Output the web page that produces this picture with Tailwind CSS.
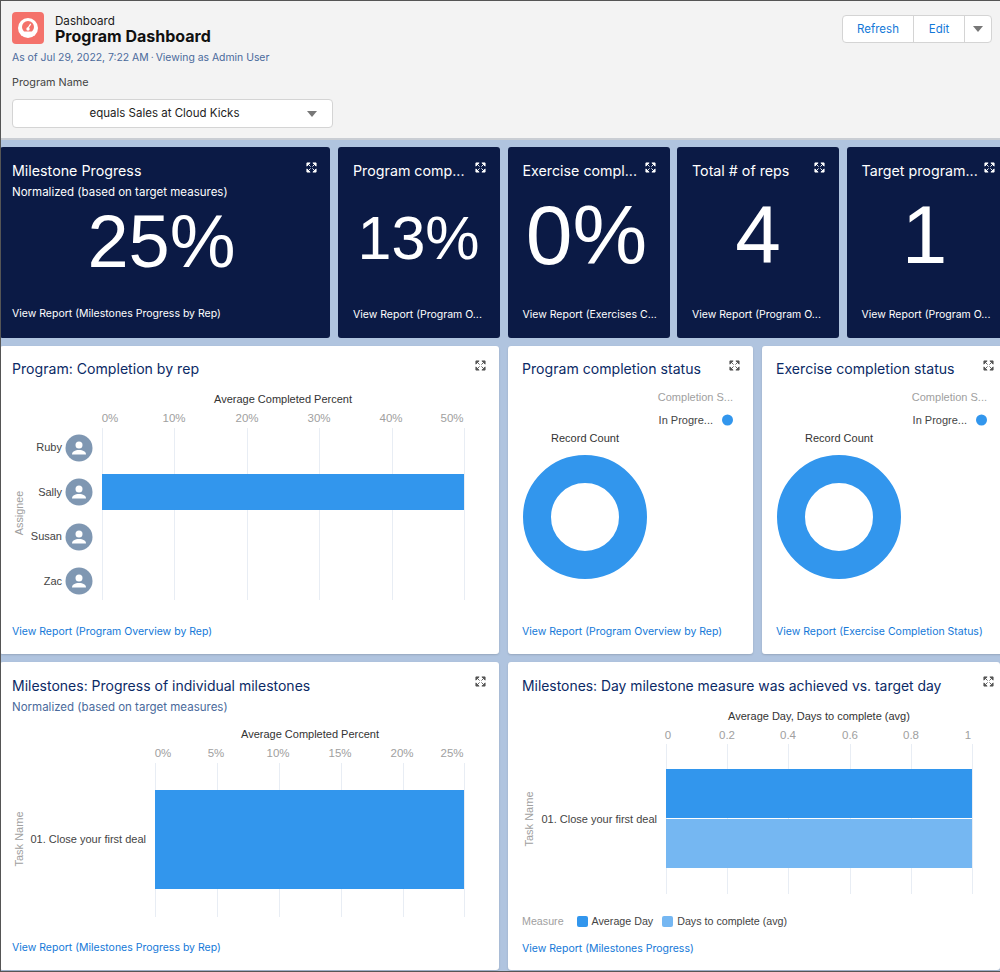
<!DOCTYPE html>
<html>
<head>
<meta charset="utf-8">
<script src="https://cdn.jsdelivr.net/npm/@tailwindcss/browser@4"></script>
</head>
<body class="m-0 w-[1000px] h-[972px] overflow-hidden bg-[#b0c4df] font-['Liberation_Sans',sans-serif]">
<div class="w-[1000px] h-[972px] flex flex-col border-t border-l border-b border-[#555] overflow-hidden">
  <header class="h-[139px] shrink-0 bg-[#f3f3f3] border-b-2 border-[#c9cdd3] pl-[11px] pr-[8px] pt-[11px] flex justify-between items-start">
    <div class="w-[321px]">
      <div class="flex items-start gap-[11px]">
        <div class="w-8 h-8 rounded-[4px] bg-[#f4726b] flex items-center justify-center">
          <svg viewBox="0 0 24 24" class="w-[24px] h-[24px]"><circle cx="12" cy="12" r="10" fill="#fff"/><circle cx="12" cy="11" r="6" fill="#f4726b"/><path d="M5 15.500h14v4H5z" fill="#fff"/><path d="M11 12.500l3.200-5 1 .7-3.300 5.300z" fill="#fff"/><circle cx="12" cy="13" r="1.700" fill="#fff"/></svg>
        </div>
        <div class="mt-[2px]">
          <div class="text-[11.6px] leading-[14px] text-[#1a1a1a] font-['Inter',sans-serif]">Dashboard</div>
          <div class="text-[16px] leading-[17px] font-bold text-[#111] font-['Inter',sans-serif]">Program Dashboard</div>
        </div>
      </div>
      <div class="mt-[6px] text-[10.4px] leading-[14px] text-[#4a6a9c] font-['Inter',sans-serif]">As of Jul 29, 2022, 7:22 AM<span class="mx-[2px]">·</span>Viewing as Admin User</div>
      <div class="mt-[11px] text-[10.8px] leading-[14px] text-[#444] font-['Inter',sans-serif]">Program Name</div>
      <div class="mt-[9px] h-[29px] bg-white border border-[#d4d4d4] rounded-[4px] flex items-center relative">
        <span class="w-full text-center pr-[16px] pt-px text-[11.5px] text-[#222] font-['Inter',sans-serif]">equals Sales at Cloud Kicks</span>
        <span class="absolute right-[15px] top-[11px] w-0 h-0 border-l-[5px] border-r-[5px] border-t-[6px] border-l-transparent border-r-transparent border-t-[#777]"></span>
      </div>
    </div>
    <div class="mt-[3px] h-[28px] flex bg-white border border-[#d4d4d4] rounded-[4px] text-[11.5px] text-[#1378d8] font-['Inter',sans-serif]">
      <div class="w-[71px] pt-[2px] flex items-center justify-center border-r border-[#d4d4d4]">Refresh</div>
      <div class="w-[51px] pt-[2px] flex items-center justify-center border-r border-[#d4d4d4]">Edit</div>
      <div class="w-[26px] flex items-center justify-center"><span class="w-0 h-0 border-l-[5px] border-r-[5px] border-t-[6px] border-l-transparent border-r-transparent border-t-[#777]"></span></div>
    </div>
  </header>

  <section class="mt-[7px] h-[191px] shrink-0 flex gap-[7.5px] -ml-px">
    <div class="w-[330px] mr-[0.5px] shrink-0 relative bg-[#0b1a45] rounded-[3px] text-white flex flex-col pl-[12px]">
      <div class="mt-[15px] text-[14.25px] leading-[18px] font-['Inter',sans-serif]">Milestone Progress</div>
      <div class="mt-[5px] text-[11.5px] leading-[15px] font-['Inter',sans-serif]">Normalized (based on target measures)</div>
      <div class="h-[84px] flex items-center justify-center text-[74px] leading-none -ml-[19px]">25%</div>
      <div class="mt-[23px] text-[10.5px] leading-[14px] font-['Inter',sans-serif]">View Report (Milestones Progress by Rep)</div>
      <svg viewBox="0 0 12 12" class="absolute right-[13px] top-[15px] w-[11px] h-[11px]" fill="#fff" stroke="#fff" stroke-width="1"><path d="M1 1h3.5L1 4.5zM11 1H7.5L11 4.500zM1 11h3.500L1 7.500zM11 11H7.500L11 7.500z"/><path d="M3 3l2 2M9 3L7 5M3 9l2-2M9 9L7 7"/></svg>
    </div>
    <div class="w-[162px] shrink-0 relative bg-[#0b1a45] rounded-[3px] text-white flex flex-col pl-[15px]">
      <div class="mt-[15px] text-[14.25px] leading-[18px] font-['Inter',sans-serif]">Program comp...</div>
      <div class="mt-[16px] h-[84px] flex items-center justify-center text-[61px] leading-none -ml-[16px]">13%</div>
      <div class="mt-[28px] text-[10.5px] leading-[14px] font-['Inter',sans-serif] whitespace-nowrap">View Report (Program O...</div>
      <svg viewBox="0 0 12 12" class="absolute right-[14px] top-[15px] w-[11px] h-[11px]" fill="#fff" stroke="#fff" stroke-width="1"><path d="M1 1h3.5L1 4.5zM11 1H7.5L11 4.500zM1 11h3.500L1 7.500zM11 11H7.500L11 7.500z"/><path d="M3 3l2 2M9 3L7 5M3 9l2-2M9 9L7 7"/></svg>
    </div>
    <div class="w-[162px] shrink-0 relative bg-[#0b1a45] rounded-[3px] text-white flex flex-col pl-[15px]">
      <div class="mt-[15px] text-[14.25px] leading-[18px] font-['Inter',sans-serif]">Exercise compl...</div>
      <div class="mt-[13px] h-[84px] flex items-center justify-center text-[84px] leading-none -ml-[19px]">0%</div>
      <div class="mt-[31px] text-[10.5px] leading-[14px] font-['Inter',sans-serif] whitespace-nowrap">View Report (Exercises C...</div>
      <svg viewBox="0 0 12 12" class="absolute right-[14px] top-[15px] w-[11px] h-[11px]" fill="#fff" stroke="#fff" stroke-width="1"><path d="M1 1h3.5L1 4.5zM11 1H7.5L11 4.500zM1 11h3.500L1 7.500zM11 11H7.500L11 7.500z"/><path d="M3 3l2 2M9 3L7 5M3 9l2-2M9 9L7 7"/></svg>
    </div>
    <div class="w-[162px] shrink-0 relative bg-[#0b1a45] rounded-[3px] text-white flex flex-col pl-[15px]">
      <div class="mt-[15px] text-[14.25px] leading-[18px] font-['Inter',sans-serif]">Total # of reps</div>
      <div class="mt-[13px] h-[84px] flex items-center justify-center text-[82px] leading-none -ml-[15px]">4</div>
      <div class="mt-[31px] text-[10.5px] leading-[14px] font-['Inter',sans-serif] whitespace-nowrap">View Report (Program O...</div>
      <svg viewBox="0 0 12 12" class="absolute right-[14px] top-[15px] w-[11px] h-[11px]" fill="#fff" stroke="#fff" stroke-width="1"><path d="M1 1h3.5L1 4.5zM11 1H7.5L11 4.500zM1 11h3.500L1 7.500zM11 11H7.500L11 7.500z"/><path d="M3 3l2 2M9 3L7 5M3 9l2-2M9 9L7 7"/></svg>
    </div>
    <div class="w-[162px] shrink-0 relative bg-[#0b1a45] rounded-[3px] text-white flex flex-col pl-[15px]">
      <div class="mt-[15px] text-[14.25px] leading-[18px] font-['Inter',sans-serif]">Target program...</div>
      <div class="mt-[13px] h-[84px] flex items-center justify-center text-[82px] leading-none -ml-[21px]">1</div>
      <div class="mt-[31px] text-[10.5px] leading-[14px] font-['Inter',sans-serif] whitespace-nowrap">View Report (Program O...</div>
      <svg viewBox="0 0 12 12" class="absolute right-[14px] top-[15px] w-[11px] h-[11px]" fill="#fff" stroke="#fff" stroke-width="1"><path d="M1 1h3.5L1 4.5zM11 1H7.5L11 4.500zM1 11h3.500L1 7.500zM11 11H7.500L11 7.500z"/><path d="M3 3l2 2M9 3L7 5M3 9l2-2M9 9L7 7"/></svg>
    </div>
  </section>

  <section class="mt-[8px] h-[308px] shrink-0 flex gap-[9px] -ml-px">
    <div class="w-[499px] shrink-0 relative bg-white rounded-[3px] shadow-[0_1px_2px_rgba(0,0,0,0.15)] flex flex-col">
      <div class="mt-[14px] ml-[12px] text-[14.1px] leading-[18px] text-[#0b2a66] font-['Inter',sans-serif]">Program: Completion by rep</div>
      <svg viewBox="0 385 499 235" class="mt-[7px] w-[499px] h-[235px] font-['Liberation_Sans',sans-serif]">
        <text x="283" y="403" font-size="11" fill="#333" text-anchor="middle">Average Completed Percent</text>
        <g font-size="11.500" fill="#a0a0a0" text-anchor="middle"><text x="110" y="422">0%</text><text x="174" y="422">10%</text><text x="247" y="422">20%</text><text x="319" y="422">30%</text><text x="391" y="422">40%</text><text x="452" y="422">50%</text></g>
        <g stroke="#e8edf4" stroke-width="1"><path d="M102.500 428v172M174.500 428v172M247.500 428v172M319.500 428v172M392.500 428v172M464.500 428v172"/></g>
        <rect x="102" y="474" width="362" height="36" fill="#3296ed"/>
        <g font-size="11" fill="#444" text-anchor="end"><text x="62" y="451">Ruby</text><text x="62" y="496">Sally</text><text x="62" y="540">Susan</text><text x="62" y="585">Zac</text></g>
        <g fill="#7f97b2"><circle cx="79" cy="448" r="13.500"/><circle cx="79" cy="492" r="13.500"/><circle cx="79" cy="537" r="13.500"/><circle cx="79" cy="581" r="13.500"/></g>
        <g fill="#fff">
          <circle cx="79" cy="445" r="3.500"/><path d="M72 454.500c0-3 3-4.500 7-4.500s7 1.500 7 4.500z"/>
          <circle cx="79" cy="489" r="3.500"/><path d="M72 498.500c0-3 3-4.500 7-4.500s7 1.500 7 4.500z"/>
          <circle cx="79" cy="534" r="3.500"/><path d="M72 543.500c0-3 3-4.500 7-4.500s7 1.500 7 4.500z"/>
          <circle cx="79" cy="578" r="3.500"/><path d="M72 587.500c0-3 3-4.500 7-4.500s7 1.500 7 4.500z"/>
        </g>
        <text transform="translate(23 513) rotate(-90)" font-size="10.800" fill="#a0a0a0" text-anchor="middle">Assignee</text>
      </svg>
      <div class="mt-[5px] ml-[12px] text-[10.5px] leading-[14px] text-[#1378d8] font-['Inter',sans-serif]">View Report (Program Overview by Rep)</div>
      <svg viewBox="0 0 12 12" class="absolute right-[13px] top-[14px] w-[11px] h-[11px]" fill="#555" stroke="#555" stroke-width="1"><path d="M1 1h3.5L1 4.5zM11 1H7.5L11 4.500zM1 11h3.500L1 7.500zM11 11H7.500L11 7.500z"/><path d="M3 3l2 2M9 3L7 5M3 9l2-2M9 9L7 7"/></svg>
    </div>
    <div class="w-[245px] shrink-0 relative bg-white rounded-[3px] shadow-[0_1px_2px_rgba(0,0,0,0.15)] flex flex-col">
      <div class="mt-[14px] ml-[14px] text-[14.1px] leading-[18px] text-[#0b2a66] font-['Inter',sans-serif]">Program completion status</div>
      <svg viewBox="0 385 245 235" class="mt-[7px] w-[245px] h-[235px]">
        <text x="225" y="401" font-size="11" fill="#a0a0a0" text-anchor="end">Completion S...</text>
        <text x="205" y="424" font-size="11" fill="#444" text-anchor="end">In Progre...</text>
        <circle cx="219.500" cy="420" r="5.500" fill="#3296ed"/>
        <text x="77" y="442" font-size="11" fill="#333" text-anchor="middle">Record Count</text>
        <circle cx="77" cy="517" r="48" fill="none" stroke="#3296ed" stroke-width="28"/>
      </svg>
      <div class="mt-[5px] ml-[14px] text-[10.5px] leading-[14px] text-[#1378d8] font-['Inter',sans-serif]">View Report (Program Overview by Rep)</div>
      <svg viewBox="0 0 12 12" class="absolute right-[13px] top-[14px] w-[11px] h-[11px]" fill="#555" stroke="#555" stroke-width="1"><path d="M1 1h3.5L1 4.5zM11 1H7.5L11 4.500zM1 11h3.500L1 7.500zM11 11H7.500L11 7.500z"/><path d="M3 3l2 2M9 3L7 5M3 9l2-2M9 9L7 7"/></svg>
    </div>
    <div class="w-[245px] shrink-0 relative bg-white rounded-[3px] shadow-[0_1px_2px_rgba(0,0,0,0.15)] flex flex-col">
      <div class="mt-[14px] ml-[14px] text-[14.1px] leading-[18px] text-[#0b2a66] font-['Inter',sans-serif]">Exercise completion status</div>
      <svg viewBox="0 385 245 235" class="mt-[7px] w-[245px] h-[235px]">
        <text x="225" y="401" font-size="11" fill="#a0a0a0" text-anchor="end">Completion S...</text>
        <text x="205" y="424" font-size="11" fill="#444" text-anchor="end">In Progre...</text>
        <circle cx="219.500" cy="420" r="5.500" fill="#3296ed"/>
        <text x="77" y="442" font-size="11" fill="#333" text-anchor="middle">Record Count</text>
        <circle cx="77" cy="517" r="48" fill="none" stroke="#3296ed" stroke-width="28"/>
      </svg>
      <div class="mt-[5px] ml-[14px] text-[10.5px] leading-[14px] text-[#1378d8] font-['Inter',sans-serif] whitespace-nowrap">View Report (Exercise Completion Status)</div>
      <svg viewBox="0 0 12 12" class="absolute right-[13px] top-[14px] w-[11px] h-[11px]" fill="#555" stroke="#555" stroke-width="1"><path d="M1 1h3.5L1 4.5zM11 1H7.5L11 4.500zM1 11h3.500L1 7.500zM11 11H7.500L11 7.500z"/><path d="M3 3l2 2M9 3L7 5M3 9l2-2M9 9L7 7"/></svg>
    </div>
  </section>

  <section class="mt-[8px] h-[308px] shrink-0 flex gap-[9px] -ml-px">
    <div class="w-[499px] shrink-0 relative bg-white rounded-[3px] shadow-[0_1px_2px_rgba(0,0,0,0.15)] flex flex-col">
      <div class="mt-[15px] ml-[12px] text-[14px] leading-[18px] text-[#0b2a66] font-['Inter',sans-serif]">Milestones: Progress of individual milestones</div>
      <div class="mt-[5px] ml-[12px] text-[11.5px] leading-[15px] text-[#4a6a9c] font-['Inter',sans-serif]">Normalized (based on target measures)</div>
      <svg viewBox="0 722 499 210" class="w-[499px] h-[210px] mt-[7px]">
        <text x="310" y="738" font-size="11" fill="#333" text-anchor="middle">Average Completed Percent</text>
        <g font-size="11.500" fill="#a0a0a0" text-anchor="middle"><text x="163" y="757">0%</text><text x="216" y="757">5%</text><text x="278" y="757">10%</text><text x="340" y="757">15%</text><text x="402" y="757">20%</text><text x="452" y="757">25%</text></g>
        <path d="M155.500 763v154M217.500 763v154M279.500 763v154M341.500 763v154M403.500 763v154M464.500 763v154" stroke="#e8edf4"/>
        <rect x="155" y="790" width="309" height="99" fill="#3296ed"/>
        <text x="146" y="843" font-size="11" fill="#444" text-anchor="end">01. Close your first deal</text>
        <text transform="translate(23 839) rotate(-90)" font-size="11" fill="#a0a0a0" text-anchor="middle">Task Name</text>
      </svg>
      <div class="mt-[9px] ml-[12px] text-[10.5px] leading-[14px] text-[#1378d8] font-['Inter',sans-serif]">View Report (Milestones Progress by Rep)</div>
      <svg viewBox="0 0 12 12" class="absolute right-[13px] top-[14px] w-[11px] h-[11px]" fill="#555" stroke="#555" stroke-width="1"><path d="M1 1h3.5L1 4.5zM11 1H7.5L11 4.500zM1 11h3.500L1 7.500zM11 11H7.500L11 7.500z"/><path d="M3 3l2 2M9 3L7 5M3 9l2-2M9 9L7 7"/></svg>
    </div>
    <div class="w-[492px] shrink-0 relative bg-white rounded-[3px] shadow-[0_1px_2px_rgba(0,0,0,0.15)] flex flex-col">
      <div class="mt-[15px] ml-[14px] text-[13.9px] leading-[18px] text-[#0b2a66] font-['Inter',sans-serif]">Milestones: Day milestone measure was achieved vs. target day</div>
      <svg viewBox="508 704 492 200" class="w-[492px] h-[200px] mt-[9px]">
        <text x="819" y="720" font-size="11" fill="#333" text-anchor="middle">Average Day, Days to complete (avg)</text>
        <g font-size="11.500" fill="#a0a0a0" text-anchor="middle"><text x="668" y="739">0</text><text x="727" y="739">0.2</text><text x="788" y="739">0.4</text><text x="850" y="739">0.6</text><text x="911" y="739">0.8</text><text x="968" y="739">1</text></g>
        <path d="M666.500 744v150M727.500 744v150M788.500 744v150M850.500 744v150M911.500 744v150M972.500 744v150" stroke="#e8edf4"/>
        <rect x="666" y="769" width="306" height="49" fill="#3296ed"/>
        <rect x="666" y="819" width="306" height="49" fill="#75b7f2"/>
        <text x="657" y="823" font-size="11" fill="#444" text-anchor="end">01. Close your first deal</text>
        <text transform="translate(533 819) rotate(-90)" font-size="11" fill="#a0a0a0" text-anchor="middle">Task Name</text>
      </svg>
      <div class="mt-[10px] ml-[14px] flex items-center text-[10.7px] leading-[14px] text-[#444] font-['Liberation_Sans',sans-serif]">
        <span class="text-[#a0a0a0] mr-[13px]">Measure</span>
        <span class="w-[11px] h-[11px] rounded-[2px] bg-[#3296ed] mr-[4px]"></span><span class="mr-[9px]">Average Day</span>
        <span class="w-[11px] h-[11px] rounded-[2px] bg-[#75b7f2] mr-[4px]"></span><span>Days to complete (avg)</span>
      </div>
      <div class="mt-[14px] ml-[14px] text-[10.5px] leading-[14px] text-[#1378d8] font-['Inter',sans-serif]">View Report (Milestones Progress)</div>
      <svg viewBox="0 0 12 12" class="absolute right-[6px] top-[14px] w-[11px] h-[11px]" fill="#555" stroke="#555" stroke-width="1"><path d="M1 1h3.5L1 4.5zM11 1H7.5L11 4.500zM1 11h3.500L1 7.500zM11 11H7.500L11 7.500z"/><path d="M3 3l2 2M9 3L7 5M3 9l2-2M9 9L7 7"/></svg>
    </div>
  </section>
</div>
</body>
</html>
